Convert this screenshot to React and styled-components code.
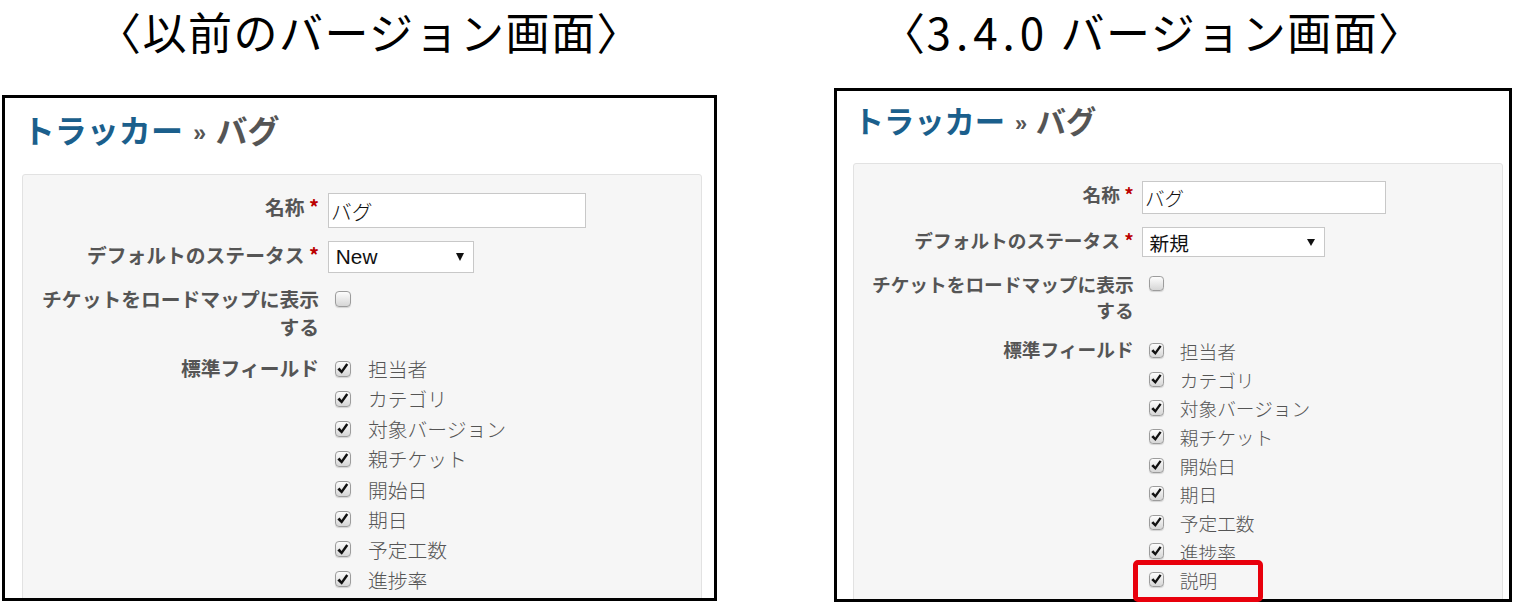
import React from "react";
import styled, { createGlobalStyle } from "styled-components";

const Global = createGlobalStyle`
  html, body { margin: 0; padding: 0; background: #fff; }
  body {
    width: 1524px; height: 613px; overflow: hidden;
    font-family: "Noto Sans CJK JP", "Noto Sans", sans-serif;
  }
`;

const Page = styled.div`
  display: flex;
  align-items: flex-start;
  padding-left: 2px;
`;

const Column = styled.section`
  display: flex;
  flex-direction: column;
  margin-left: ${(p) => p.$ml}px;
`;

const Heading = styled.h1`
  margin: 0 0 0 ${(p) => p.$indent}px;
  font-family: "Noto Sans CJK JP", sans-serif;
  font-weight: 400;
  font-size: 44px;
  line-height: 62px;
  letter-spacing: 1.5px;
  color: #000;
  white-space: nowrap;
`;

const Num = styled.span`
  letter-spacing: 5px;
`;

const Frame = styled.div`
  position: relative;
  box-sizing: border-box;
  width: ${(p) => p.$w}px;
  height: ${(p) => p.$h}px;
  margin-top: ${(p) => p.$mt}px;
  padding: 3px;
  overflow: hidden;
  background: #fff;
  font-size: ${(p) => p.$base}px;
  &::after {
    content: "";
    position: absolute;
    inset: 0;
    border: 3px solid #000;
    z-index: 1;
    pointer-events: none;
  }
`;

const Title = styled.h2`
  margin: 0;
  padding: 0.375em 0 0 0.55em;
  font-size: 1.62em;
  line-height: 1.2;
  font-weight: 700;
  color: #555;
  white-space: nowrap;
`;

const Crumb = styled.span`
  color: #1b5f8c;
`;

const Sep = styled.span`
  font-family: "Liberation Sans", Arial, sans-serif;
  font-size: 0.72em;
  font-weight: 700;
  color: #555;
  margin: 0 0.4em 0 0.45em;
  vertical-align: 0.1em;
`;

const Panel = styled.div`
  margin: 1.3em ${(p) => p.$mr}px 0 0.86em;
  padding: 0.91em 0.35em 3em;
  background: #f6f6f6;
  border: 1px solid #e2e2e2;
  border-radius: 3px;
  display: flex;
  flex-direction: column;
  gap: ${(p) => p.$gap}em;
`;

const Row = styled.div`
  display: flex;
  align-items: flex-start;
`;

const Label = styled.div`
  flex: 0 0 14.6em;
  margin-right: 0.45em;
  text-align: right;
  font-weight: 700;
  color: #555;
  line-height: 1.4em;
`;

const Required = styled.span`
  color: #bb0000;
`;

const TextInput = styled.input`
  box-sizing: border-box;
  width: 12.4em;
  height: 1.67em;
  margin: 0;
  padding: 0 0.1em;
  font-size: 1.05em;
  font-family: "Noto Sans CJK JP", sans-serif;
  font-weight: 300;
  color: #111;
  background: #fff;
  border: 1px solid #c8c8c8;
  border-radius: 0;
  outline: none;
`;

const SelectBox = styled.div`
  box-sizing: border-box;
  width: ${(p) => p.$w}em;
  height: 1.6em;
  display: flex;
  align-items: center;
  justify-content: space-between;
  padding: 0 0.5em 0 0.35em;
  background: #fff;
  border: 1px solid #c8c8c8;
`;

const SelectValue = styled.span`
  font-size: 1.05em;
  color: #111;
  font-family: ${(p) =>
    p.$latin
      ? '"Liberation Sans", Arial, sans-serif'
      : '"Noto Sans CJK JP", sans-serif'};
`;

const Caret = styled.span`
  width: 0;
  height: 0;
  border-left: 0.23em solid transparent;
  border-right: 0.23em solid transparent;
  border-top: 0.42em solid #111;
`;

const Check = styled.span`
  flex: 0 0 auto;
  box-sizing: border-box;
  width: 0.82em;
  height: 0.82em;
  margin-left: 0.35em;
  margin-top: ${(p) => p.$mt || 0}em;
  border: 1px solid #9c9c9c;
  border-radius: 0.2em;
  background: linear-gradient(#fdfdfd, #d6d6d6);
  box-shadow: 0 1px 1px rgba(0, 0, 0, 0.14);
  display: inline-flex;
  align-items: center;
  justify-content: center;
  svg {
    width: 0.68em;
    height: 0.68em;
    display: block;
  }
`;

const FieldList = styled.div`
  display: flex;
  flex-direction: column;
`;

const FieldItem = styled.div`
  position: relative;
  display: flex;
  align-items: center;
  height: ${(p) => p.$lh}em;
`;

const FieldText = styled.span`
  margin-left: 0.85em;
  color: #555;
  font-weight: 300;
  white-space: nowrap;
`;

const Highlight = styled.span`
  position: absolute;
  left: -9px;
  top: calc(50% - 20px);
  width: 130px;
  height: 42px;
  box-sizing: border-box;
  border: 5px solid #e8000c;
  border-radius: 5px;
  z-index: 2;
  pointer-events: none;
`;

const Tick = () => (
  <svg viewBox="0 0 16 16">
    <path
      d="M1.6 8.8 L4.2 6.6 L6.6 9.4 L12.2 1.6 L14.6 3.3 L6.9 14 Z"
      fill="#111"
    />
  </svg>
);

const Checkbox = ({ checked, mt }) => (
  <Check $mt={mt}>{checked ? <Tick /> : null}</Check>
);

const TrackerForm = ({ status, latin, selectW, gap, itemLh, fields, highlight, mr }) => (
  <>
    <Title>
      <Crumb>トラッカー</Crumb>
      <Sep>»</Sep>バグ
    </Title>
    <Panel $gap={gap} $mr={mr}>
      <Row>
        <Label>
          名称 <Required>*</Required>
        </Label>
        <TextInput readOnly value="バグ" />
      </Row>
      <Row>
        <Label>
          デフォルトのステータス <Required>*</Required>
        </Label>
        <SelectBox $w={selectW}>
          <SelectValue $latin={latin}>{status}</SelectValue>
          <Caret />
        </SelectBox>
      </Row>
      <Row>
        <Label>チケットをロードマップに表示する</Label>
        <Checkbox mt={0.29} />
      </Row>
      <Row>
        <Label>標準フィールド</Label>
        <FieldList>
          {fields.map((f) => (
            <FieldItem key={f} $lh={itemLh}>
              <Checkbox checked />
              <FieldText>{f}</FieldText>
              {highlight === f ? <Highlight /> : null}
            </FieldItem>
          ))}
        </FieldList>
      </Row>
    </Panel>
  </>
);

const baseFields = [
  "担当者",
  "カテゴリ",
  "対象バージョン",
  "親チケット",
  "開始日",
  "期日",
  "予定工数",
  "進捗率",
];

export default function App() {
  return (
    <>
      <Global />
      <Page>
        <Column $ml={0}>
          <Heading $indent={95}>〈以前のバージョン画面〉</Heading>
          <Frame $w={715} $h={506} $mt={33} $base={19.8}>
            <TrackerForm
              status="New"
              latin
              selectW={7.4}
              gap={0.65}
              itemLh={1.52}
              fields={baseFields}
              mr={12}
            />
          </Frame>
        </Column>
        <Column $ml={117}>
          <Heading $indent={47}>
            〈<Num>3.4.0</Num> バージョン画面〉
          </Heading>
          <Frame $w={678} $h={514} $mt={26} $base={18.7}>
            <TrackerForm
              status="新規"
              selectW={9.8}
              gap={0.72}
              itemLh={1.53}
              fields={[...baseFields, "説明"]}
              highlight="説明"
              mr={6}
            />
          </Frame>
        </Column>
      </Page>
    </>
  );
}
